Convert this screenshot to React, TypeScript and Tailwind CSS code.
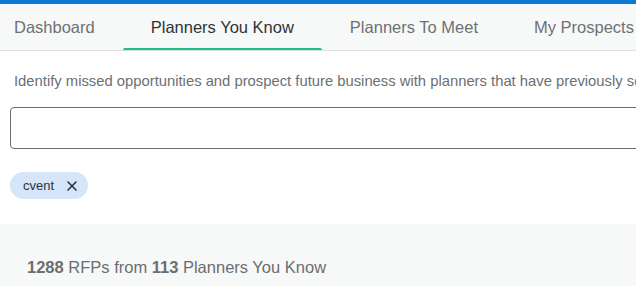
import React from 'react';

const tabs = ['Dashboard', 'Planners You Know', 'Planners To Meet', 'My Prospects', 'Insights'];

export default function App() {
  const active = 1;
  return (
    <div className="w-[636px] h-[286px] overflow-hidden bg-white font-['Liberation_Sans',Arial,sans-serif]">
      <div className="h-1 bg-[#0b79d0]" />
      {/* tabs */}
      <div className="h-[47px] bg-[#f7f8f8] border-b border-[#dcdfe0] flex overflow-hidden">
        <div className="flex -ml-[14px] shrink-0">
          {tabs.map((t, i) => (
            <div
              key={t}
              className={`relative h-[47px] px-7 flex items-center text-[16.5px] whitespace-nowrap ${
                i === active ? 'text-[#2f3336]' : 'text-[#6d7275]'
              }`}
            >
              {t}
              {i === active && (
                <span className="absolute left-0 right-0 -bottom-px h-1 rounded-full bg-[#1bbf8e]" />
              )}
            </div>
          ))}
        </div>
      </div>

      <div className="px-[10px]">
        <p className="mt-[19px] pl-1 text-[14.8px] text-[#6b7073] whitespace-nowrap">
          Identify missed opportunities and prospect future business with planners that have previously sourced with you.
        </p>
        <div className="mt-[15px] h-[42px] w-[700px] rounded border border-[#6a6d70] bg-white" />
        <div className="mt-[23px] inline-flex items-center h-[27px] rounded-full bg-[#d5e6fb] pl-[13px] pr-[10px] text-[13px] text-[#2e3235]">
          <span>cvent</span>
          <svg className="ml-[12px] w-[12px] h-[12px]" viewBox="0 0 12 12" fill="none" stroke="#2e3235" strokeWidth="1.6" strokeLinecap="round">
            <path d="M2 2l8 8M10 2l-8 8" />
          </svg>
        </div>
      </div>

      <div className="mt-[25px] h-[80px] bg-[#f7f8f8] pl-[27px] pt-[31px] text-[16.5px] text-[#6b6e70]">
        <span className="font-bold">1288</span> RFPs from <span className="font-bold">113</span> Planners You Know
      </div>
    </div>
  );
}
